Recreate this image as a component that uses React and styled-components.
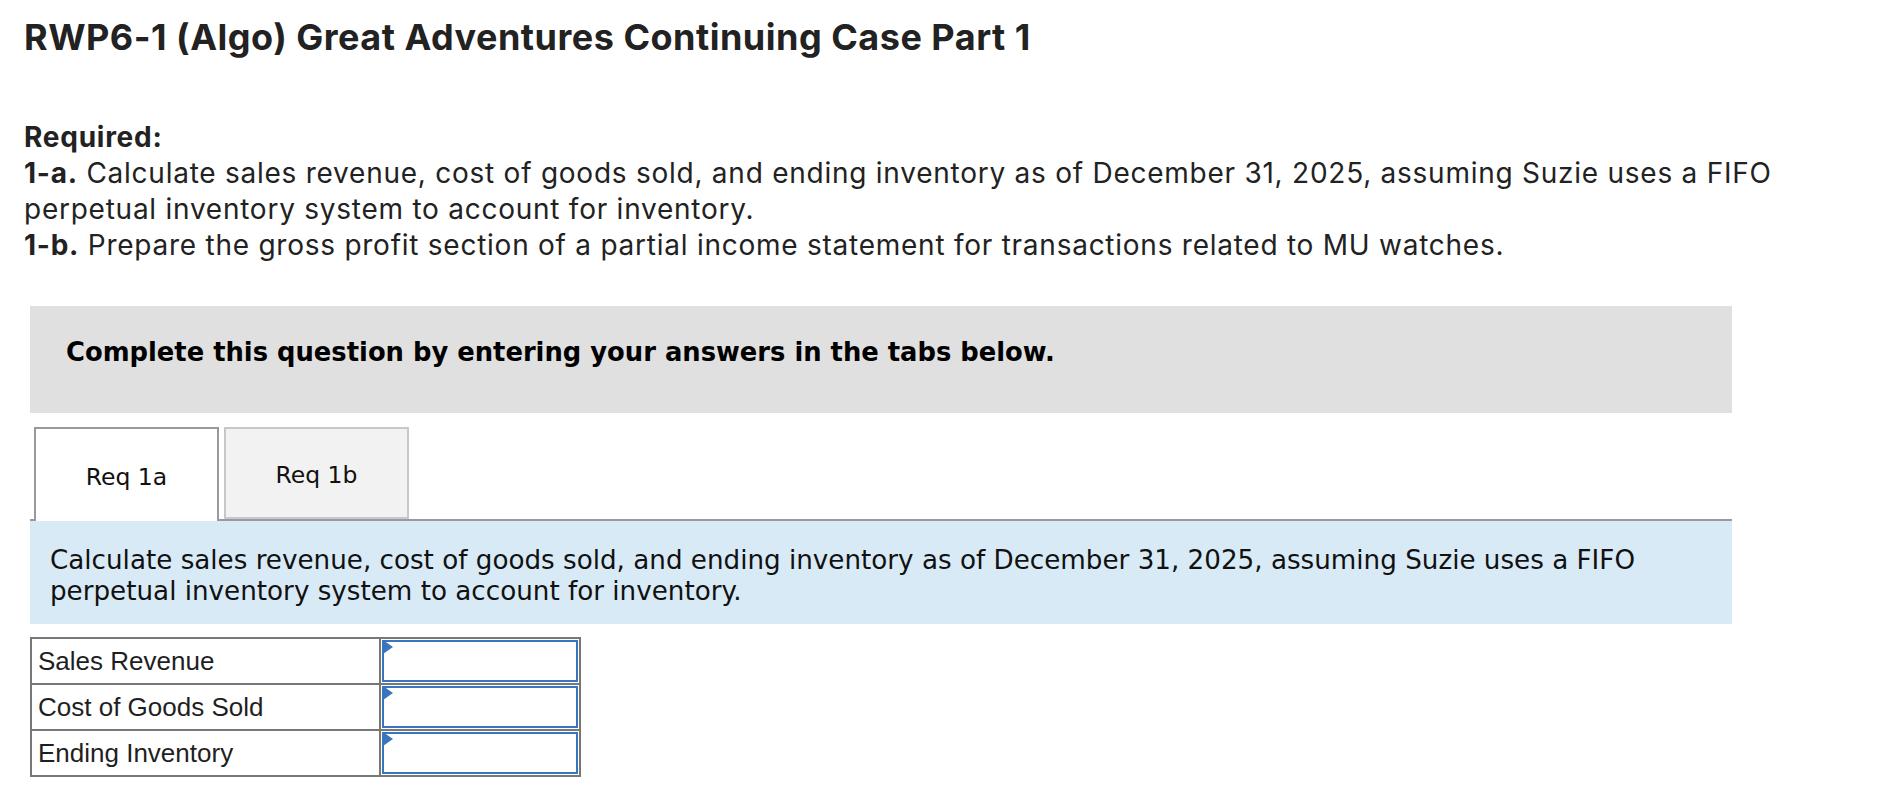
import React from "react";
import styled, { createGlobalStyle } from "styled-components";

const Global = createGlobalStyle`
  html, body { margin: 0; padding: 0; background: #fff; }
  body { font-family: "Inter", "Liberation Sans", sans-serif; color: #1f1f1f; }
`;

const Page = styled.div`
  padding: 15px 0 0 24px;
`;

const Title = styled.h1`
  margin: 0;
  font-family: "Inter", sans-serif;
  font-weight: 700;
  font-size: 36px;
  line-height: 44px;
  letter-spacing: 0.5px;
  color: #222;
`;

const Required = styled.div`
  margin-top: 60px;
  width: 1800px;
  font-family: "Inter", sans-serif;
  font-size: 28px;
  line-height: 36px;
  letter-spacing: 0.75px;
  color: #222;
`;

const Line = styled.div``;

const B = styled.b`
  font-weight: 700;
`;

const Notice = styled.div`
  margin: 43px 0 0 6px;
  width: 1702px;
  height: 107px;
  background: #e0e0e0;
  display: flex;
  align-items: flex-start;
  padding: 31px 0 0 36px;
  box-sizing: border-box;
  font-family: "DejaVu Sans", Verdana, sans-serif;
  font-weight: 700;
  font-size: 25.8px;
  line-height: 30px;
  color: #000;
`;

const Tabs = styled.div`
  margin: 14px 0 0 6px;
  width: 1702px;
  display: flex;
  gap: 5px;
  padding-left: 4px;
  border-bottom: 2px solid #9a9a9a;
  height: 94px;
  box-sizing: border-box;
`;

const Tab = styled.div`
  width: 185px;
  height: ${p => (p.$active ? "94px" : "92px")};
  box-sizing: border-box;
  border: 2px solid ${p => (p.$active ? "#999" : "#c8c8c8")};
  border-bottom: ${p => (p.$active ? "none" : "2px solid #c8c8c8")};
  background: ${p => (p.$active ? "#fff" : "#f2f2f2")};
  display: flex;
  align-items: center;
  justify-content: center;
  padding-top: 4px;
  font-family: "DejaVu Sans", Verdana, sans-serif;
  font-size: 23.5px;
  color: #111;
  position: relative;
  z-index: 1;
`;

const Instruction = styled.div`
  margin-left: 6px;
  width: 1702px;
  box-sizing: border-box;
  background: #d9eaf7;
  padding: 24px 20px 17px 20px;
  font-family: "DejaVu Sans", Verdana, sans-serif;
  font-size: 26.2px;
  line-height: 31px;
  color: #111;
`;

const Table = styled.table`
  margin: 13px 0 0 6px;
  border-collapse: collapse;
  border: 2px solid #777;
`;

const Row = styled.tr`
  height: 46px;
`;

const Label = styled.td`
  width: 349px;
  box-sizing: border-box;
  border: 2px solid #777;
  padding: 0 0 0 6px;
  font-family: "Liberation Sans", Arial, sans-serif;
  font-size: 26px;
  color: #1f1f1f;
  vertical-align: middle;
`;

const InputCell = styled.td`
  width: 198px;
  border: 2px solid #777;
  padding: 0;
  position: relative;
`;

const Input = styled.div`
  height: 42px;
  margin: 0 1px;
  border: 2px solid #3a76bf;
  box-sizing: border-box;
  background: #fff;
`;

const Marker = styled.span`
  position: absolute;
  top: 1px;
  left: 2px;
  width: 0;
  height: 0;
  border-top: 7px solid transparent;
  border-bottom: 7px solid transparent;
  border-left: 10px solid #3a76bf;
`;

const rows = ["Sales Revenue", "Cost of Goods Sold", "Ending Inventory"];

export default function App() {
  return (
    <>
      <Global />
      <Page>
        <Title>RWP6-1 (Algo) Great Adventures Continuing Case Part 1</Title>
        <Required>
          <Line><B>Required:</B></Line>
          <Line>
            <B>1-a.</B> Calculate sales revenue, cost of goods sold, and ending inventory as of December 31, 2025, assuming Suzie uses a FIFO perpetual inventory system to account for inventory.
          </Line>
          <Line>
            <B>1-b.</B> Prepare the gross profit section of a partial income statement for transactions related to MU watches.
          </Line>
        </Required>
        <Notice>Complete this question by entering your answers in the tabs below.</Notice>
        <Tabs>
          <Tab $active>Req 1a</Tab>
          <Tab>Req 1b</Tab>
        </Tabs>
        <Instruction>
          Calculate sales revenue, cost of goods sold, and ending inventory as of December 31, 2025, assuming Suzie uses a FIFO perpetual inventory system to account for inventory.
        </Instruction>
        <Table>
          <tbody>
            {rows.map(r => (
              <Row key={r}>
                <Label>{r}</Label>
                <InputCell>
                  <Input />
                  <Marker />
                </InputCell>
              </Row>
            ))}
          </tbody>
        </Table>
      </Page>
    </>
  );
}
